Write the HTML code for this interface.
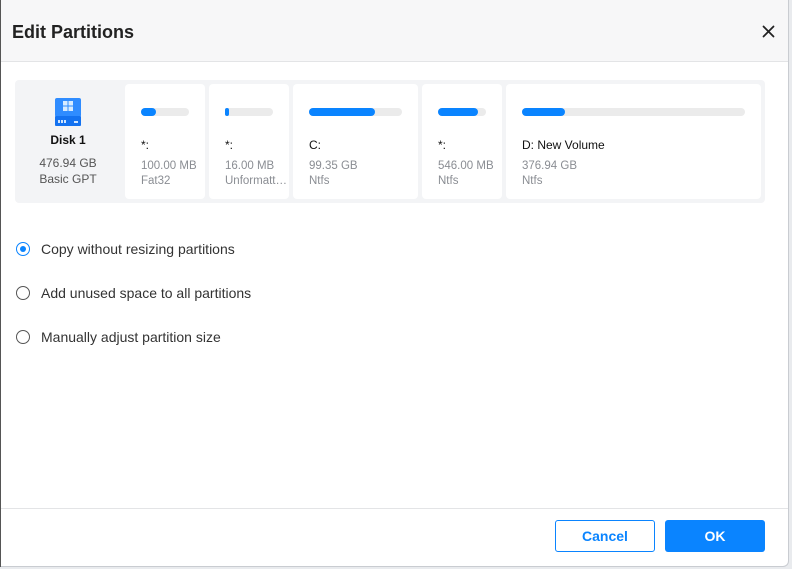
<!DOCTYPE html>
<html><head><meta charset="utf-8"><style>
*{box-sizing:border-box;margin:0;padding:0}
body{width:792px;height:569px;background:#e9ebee;font-family:"Liberation Sans",sans-serif;position:relative;overflow:hidden}
.dlg{position:absolute;left:0;top:0;width:789px;height:567px;background:#fff;border-right:1px solid #c9ccd1;border-bottom:1px solid #c9ccd1;border-radius:0 0 6px 0}
.lb{position:absolute;left:0;top:0;width:1px;height:567px;background:#555;z-index:5}
.hdr{position:absolute;left:0;top:0;right:0;height:62px;background:#f7f7f8;border-bottom:1px solid #e3e4e6}
.title{position:absolute;left:12px;top:22px;font-size:18px;font-weight:bold;color:#222}
.panel{position:absolute;left:15px;top:80px;width:750px;height:123px;background:#f3f4f6;border-radius:4px}
.card{position:absolute;top:4px;height:115px;background:#fff;border-radius:4px}
.bar{position:absolute;left:16px;top:24px;height:8px;background:#ebebeb;border-radius:4px}
.bar i{display:block;height:8px;background:#0a84ff;border-radius:4px}
.nm{position:absolute;left:16px;top:54px;font-size:12px;color:#111}
.sz{position:absolute;left:16px;top:75px;font-size:11.5px;color:#8a8d93;line-height:15px;white-space:nowrap;overflow:hidden;text-overflow:ellipsis}
.radio{position:absolute;left:16px;width:14px;height:14px;border:1.5px solid #555;border-radius:50%}
.radio.on{border-color:#0a84ff}
.radio.on:after{content:"";position:absolute;left:2.5px;top:2.5px;width:6px;height:6px;border-radius:50%;background:#0a84ff}
.lbl{position:absolute;left:41px;font-size:14px;color:#333}
.ftr{position:absolute;left:0;right:0;top:508px;border-top:1px solid #e3e4e6}
.btn{position:absolute;top:520px;width:100px;height:32px;border-radius:3px;font-size:14px;font-weight:bold;text-align:center;line-height:32px}
</style></head><body>
<div class="lb"></div>
<div class="dlg">
<div class="hdr"><div class="title">Edit Partitions</div>
<svg style="position:absolute;left:762px;top:25px" width="13" height="13" viewBox="0 0 13 13"><path d="M1.5 1.5L11.5 11.5M11.5 1.5L1.5 11.5" stroke="#222" stroke-width="1.8" stroke-linecap="round"/></svg></div>
<div class="panel">
 <svg style="position:absolute;left:39px;top:17px" width="28" height="30" viewBox="0 0 28 30">
  <rect x="1" y="1" width="26" height="19" rx="2" fill="#2f8cff"/>
  <rect x="1" y="19" width="26" height="10" rx="1" fill="#1472f0"/>
  <rect x="9" y="4" width="4.5" height="4.5" fill="#d6ebff"/><rect x="14.5" y="4" width="4.5" height="4.5" fill="#d6ebff"/>
  <rect x="9" y="9.5" width="4.5" height="4.5" fill="#d6ebff"/><rect x="14.5" y="9.5" width="4.5" height="4.5" fill="#d6ebff"/>
  <rect x="4" y="23" width="2" height="3" fill="#cfe5ff"/><rect x="7" y="23" width="2" height="3" fill="#cfe5ff"/><rect x="10" y="23" width="2" height="3" fill="#cfe5ff"/>
  <rect x="20" y="24" width="4" height="2" fill="#cfe5ff"/>
 </svg>
 <div style="position:absolute;left:0;width:106px;top:53px;text-align:center;font-size:12px;font-weight:bold;color:#111">Disk 1</div>
 <div style="position:absolute;left:0;width:106px;top:75px;text-align:center;font-size:12px;color:#555;line-height:16px">476.94 GB<br>Basic GPT</div>
 <div class="card" style="left:110px;width:80px"><div class="bar" style="width:48px"><i style="width:15px"></i></div><div class="nm">*:</div><div class="sz">100.00 MB<br>Fat32</div></div>
 <div class="card" style="left:194px;width:80px"><div class="bar" style="width:48px"><i style="width:4px"></i></div><div class="nm">*:</div><div class="sz" style="width:62px">16.00 MB<br>Unformatted</div></div>
 <div class="card" style="left:278px;width:125px"><div class="bar" style="width:93px"><i style="width:66px"></i></div><div class="nm">C:</div><div class="sz">99.35 GB<br>Ntfs</div></div>
 <div class="card" style="left:407px;width:80px"><div class="bar" style="width:48px"><i style="width:40px"></i></div><div class="nm">*:</div><div class="sz">546.00 MB<br>Ntfs</div></div>
 <div class="card" style="left:491px;width:255px"><div class="bar" style="width:223px"><i style="width:43px"></i></div><div class="nm">D: New Volume</div><div class="sz">376.94 GB<br>Ntfs</div></div>
</div>
<div class="radio on" style="top:242px"></div><div class="lbl" style="top:241px">Copy without resizing partitions</div>
<div class="radio" style="top:286px"></div><div class="lbl" style="top:285px">Add unused space to all partitions</div>
<div class="radio" style="top:330px"></div><div class="lbl" style="top:329px">Manually adjust partition size</div>
<div class="ftr"></div>
<div class="btn" style="left:555px;border:1px solid #0a84ff;color:#0a84ff;background:#fff;line-height:30px">Cancel</div>
<div class="btn" style="left:665px;background:#0a84ff;color:#fff">OK</div>
</div>
</body></html>
